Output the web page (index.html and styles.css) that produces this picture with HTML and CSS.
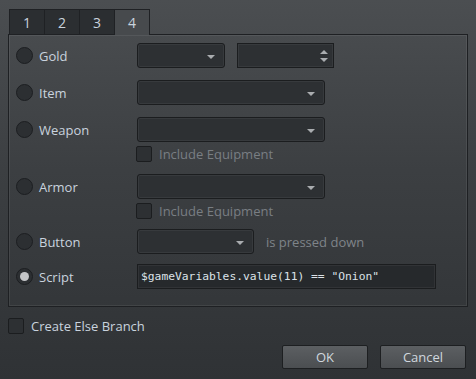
FILE: index.html
```html
<!DOCTYPE html>
<html>
<head>
  <title>Conditional Branch</title>
  <link rel="stylesheet" href="styles.css">
</head>
<body>
  <div class="tabs">
    <div class="tab">1</div>
    <div class="tab">2</div>
    <div class="tab">3</div>
    <div class="tab active">4</div>
  </div>
  <div class="panel">
    <div class="row">
      <div class="opt"><span class="radio"></span>Gold</div>
      <div class="combo w88"><span class="arrow"></span></div>
      <div class="spin"><span class="up"></span><span class="down"></span></div>
    </div>
    <div class="row">
      <div class="opt"><span class="radio"></span>Item</div>
      <div class="combo w188"><span class="arrow"></span></div>
    </div>
    <div class="row">
      <div class="opt"><span class="radio"></span>Weapon</div>
      <div class="combo w188"><span class="arrow"></span></div>
    </div>
    <div class="sub"><span class="check"></span>Include Equipment</div>
    <div class="row">
      <div class="opt"><span class="radio"></span>Armor</div>
      <div class="combo w188"><span class="arrow"></span></div>
    </div>
    <div class="sub"><span class="check"></span>Include Equipment</div>
    <div class="row tight">
      <div class="opt"><span class="radio"></span>Button</div>
      <div class="combo w117"><span class="arrow"></span></div>
      <span class="hint">is pressed down</span>
    </div>
    <div class="row last">
      <div class="opt"><span class="radio on"></span>Script</div>
      <div class="field">$gameVariables.value(11) == "Onion"</div>
    </div>
  </div>
  <div class="else"><span class="check"></span>Create Else Branch</div>
  <div class="buttons">
    <button>OK</button>
    <button>Cancel</button>
  </div>
</body>
</html>
```
FILE: styles.css
```css
html { background: #303336; }
body {
  margin: 0; width: 476px; height: 379px; box-sizing: border-box; padding: 9px 8px 0;
  background: linear-gradient(#4b4e51, #3c3f42 45%, #2f3235);
  font-family: "Open Sans", sans-serif; font-size: 13px; color: #c9d3de;
}
.tabs { display: flex; margin-left: 1px; height: 25px; position: relative; z-index: 1; }
.tab {
  width: 34px; height: 24px; border: 1px solid #1f2124; border-right: none;
  background: #2b2e31; display: flex; align-items: center; justify-content: center;
  font-size: 14px;
}
.tab.active { width: 34px; border-right: 1px solid #1f2124; border-bottom: none; height: 25px; background: #474a4d; }
.panel {
  height: 263px; border: 1px solid #1e2023; box-shadow: inset 0 0 0 1px rgba(255,255,255,0.07);
  padding: 8px 0 0 7px; box-sizing: content-box;
}
.row { display: flex; align-items: center; height: 25px; margin-top: 12px; }
.row:first-child { margin-top: 0; }
.row.tight { margin-top: 10px; }
.row.last { margin-top: 10px; }
.opt { width: 121px; display: flex; align-items: center; }
.radio {
  width: 15px; height: 15px; border-radius: 50%; border: 1px solid #1c1e21;
  background: #2c2f32; margin-right: 6px; display: flex; align-items: center; justify-content: center;
}
.radio.on::after { content: ""; width: 9px; height: 9px; border-radius: 50%; background: #c4c6c8; }
.combo, .spin, .field {
  height: 23px; border: 1px solid #1b1d1f; border-radius: 3px; background: #2d3033;
  box-shadow: inset 0 0 0 1px rgba(255,255,255,0.05); display: flex; align-items: center;
  justify-content: flex-end; box-sizing: content-box;
}
.w88 { width: 86px; }
.w188 { width: 186px; }
.w117 { width: 115px; }
.arrow {
  width: 0; height: 0; border-left: 4px solid transparent; border-right: 4px solid transparent;
  border-top: 4px solid #a9acaf; margin-right: 9px; margin-top: 2px;
}
.spin { width: 95px; margin-left: 12px; border-radius: 0; flex-direction: column; align-items: flex-end; justify-content: center; gap: 4px; }
.spin .up, .spin .down { width: 0; height: 0; border-left: 4px solid transparent; border-right: 4px solid transparent; margin-right: 5px; }
.spin .up { border-bottom: 4px solid #a9acaf; }
.spin .down { border-top: 4px solid #a9acaf; }
.hint { margin-left: 12px; color: #7f8489; }
.field {
  border-radius: 0; justify-content: flex-start; padding-left: 3px; width: 294px;
  background: #26292c; font-family: "DejaVu Sans Mono", monospace; font-size: 11.3px; color: #dce2e8;
}
.sub { display: flex; align-items: center; height: 16px; margin-top: 4px; margin-left: 120px; color: #797e83; }
.check {
  width: 14px; height: 14px; border: 1px solid #1b1d1f; border-radius: 2px; background: #2d3033;
  margin-right: 7px;
}
.else { display: flex; align-items: center; height: 16px; margin-top: 11px; }
.buttons { display: flex; justify-content: flex-end; gap: 12px; margin-top: 11px; margin-right: 2px; }
button {
  width: 86px; height: 24px; border: 1px solid #1d1f21; border-radius: 2px;
  background: linear-gradient(#5c5f62, #4b4e51); color: #d0d7de;
  font-family: "Open Sans", sans-serif; font-size: 13px; padding: 0;
}
```
